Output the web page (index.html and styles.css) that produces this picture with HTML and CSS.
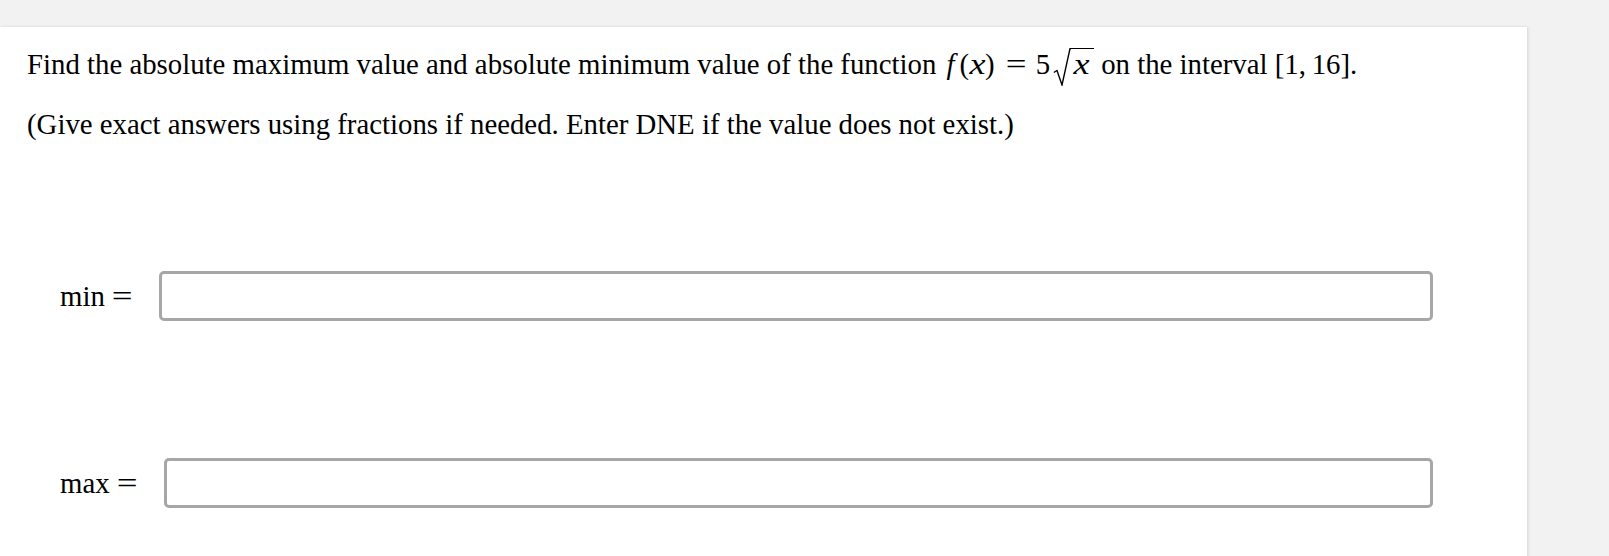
FILE: index.html
```html
<!DOCTYPE html>
<html>
<head>
<meta charset="utf-8">
<link rel="stylesheet" href="styles.css">
</head>
<body>
<div class="page">
  <div class="panel">
    <p class="q q1">Find the absolute maximum value and absolute minimum value of the function <span class="math"><span class="mi mf">f</span><span class="mo">(</span><span class="mi mx">x</span><span class="mo">)</span><span class="mrel">=</span><span class="mn">5</span><span class="rad"><svg class="radsign" width="18" height="38" viewBox="0 0 18 38"><path d="M0.8 24.5 L4 22.5 L9 37 L17 0.7 L18 0.7" fill="none" stroke="#000" stroke-width="1.4"/></svg><span class="radicand"><span class="mi mx">x</span></span></span></span> on the interval [1,&thinsp;16].</p>
    <p class="q q2">(Give exact answers using fractions if needed. Enter DNE if the value does not exist.)</p>
    <div class="row row-min">
      <span class="label">min <span class="eq">=</span></span>
      <input class="answer" type="text">
    </div>
    <div class="row row-max">
      <span class="label">max <span class="eq">=</span></span>
      <input class="answer" type="text">
    </div>
  </div>
</div>
</body>
</html>
```
FILE: styles.css
```css
html, body {
  margin: 0;
  padding: 0;
  background: #f2f2f2;
}
.page {
  padding-top: 27px;
  height: 529px;
  overflow: hidden;
}
.panel {
  width: 1527px;
  height: 540px;
  background: #fff;
  box-shadow: 1px 0 3px rgba(0, 0, 0, 0.12);
  padding: 20px 0 0 27px;
  box-sizing: border-box;
  font-family: "Liberation Serif", "Times New Roman", serif;
  font-size: 28.8px;
  color: #000;
}
.q {
  margin: 0;
  line-height: 34px;
}
.q2 {
  margin-top: 25.6px;
}
.math {
  white-space: nowrap;
}
.mi {
  font-style: italic;
}
.mf {
  margin-left: 3px;
  margin-right: 5px;
}
.mx {
  display: inline-block;
  transform: scaleX(1.25);
  margin: 0 1.5px;
}
.mrel,
.eq {
  display: inline-block;
  transform: scaleX(1.28);
}
.mrel {
  margin: 0 12px 0 13px;
}
.eq {
  margin: 0 2px;
}
.rad {
  margin-left: 3px;
}
.radsign {
  vertical-align: -7px;
  margin-bottom: -5px;
}
.radicand {
  display: inline-block;
  line-height: 30px;
  border-top: 1.4px solid #000;
  padding: 0 5px 0 2px;
}
.row {
  display: flex;
  align-items: center;
  margin-left: 33px;
  margin-right: 94px;
}
.row-min {
  margin-top: 130px;
}
.row-max {
  margin-top: 137px;
}
.label {
  line-height: 34px;
  margin-right: 27px;
  white-space: nowrap;
}
.answer {
  flex: 1;
  height: 50px;
  box-sizing: border-box;
  border: 3px solid #a7a7a7;
  border-radius: 5px;
  background: #fff;
  outline: none;
  font: inherit;
  padding: 0 8px;
}
```
